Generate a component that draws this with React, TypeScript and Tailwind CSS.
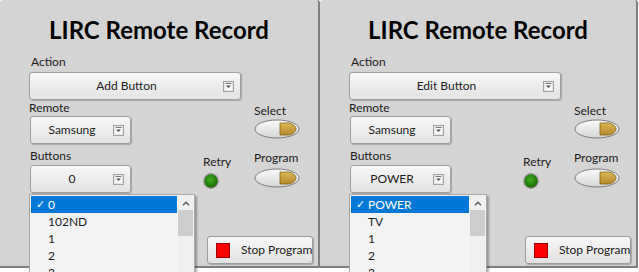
import React from 'react';

const Arrow = () => (
  <span className="flex h-[11px] w-[11px] items-center justify-center border border-[#a3a3a3] bg-[#f8f8f8] shadow-[inset_0_0_0_1px_#e4e4e4]">
    <svg width="7" height="6" viewBox="0 0 7 6">
      <rect x="0.5" y="0" width="6" height="1" fill="#7a7a7a" />
      <path d="M1 2.5 H6 L3.5 5 Z" fill="#555" />
    </svg>
  </span>
);

const Ring = ({ value, className }: { value: string; className: string }) => (
  <div
    className={`flex h-[28px] items-center rounded-[3px] border border-[#a0a0a0] bg-gradient-to-b from-[#f7f7f7] to-[#e3e3e3] shadow-[1px_1px_1px_rgba(0,0,0,0.22)] ${className}`}
  >
    <span className="flex-1 text-center text-[12px] text-[#1b1b1b]">{value}</span>
    <span className="mr-[6px]">
      <Arrow />
    </span>
  </div>
);

const Toggle = () => (
  <svg width="46" height="20" viewBox="0 0 46 20">
    <defs>
      <linearGradient id="tgl" x1="0" y1="0" x2="0" y2="1">
        <stop offset="0" stopColor="#fbfbfb" />
        <stop offset="1" stopColor="#d6d6d6" />
      </linearGradient>
      <linearGradient id="gold" x1="0" y1="0" x2="0" y2="1">
        <stop offset="0" stopColor="#dcb654" />
        <stop offset="1" stopColor="#b38a2a" />
      </linearGradient>
    </defs>
    <ellipse cx="23" cy="10" rx="22" ry="9" fill="url(#tgl)" stroke="#7c7c7c" />
    <path d="M26 4 H34 C39 4 42 8 42 10 C42 12 39 16 34 16 H26 Z" fill="url(#gold)" stroke="#7d5f1c" strokeWidth="0.8" />
  </svg>
);

const Led = () => (
  <svg width="16" height="16" viewBox="0 0 16 16">
    <defs>
      <radialGradient id="led" cx="0.45" cy="0.4" r="0.6">
        <stop offset="0" stopColor="#3fae1c" />
        <stop offset="1" stopColor="#146400" />
      </radialGradient>
    </defs>
    <circle cx="8" cy="8" r="7.3" fill="url(#led)" stroke="#9c9c9c" strokeWidth="1.2" />
  </svg>
);

const StopButton = () => (
  <div className="flex h-[28px] w-[106px] items-center rounded-[3px] border border-[#9c9c9c] bg-gradient-to-b from-[#f7f7f7] to-[#e2e2e2] shadow-[1px_1px_1px_rgba(0,0,0,0.22)]">
    <span className="ml-[8px] h-[15px] w-[14px] shrink-0 border border-[#a00000] bg-[#ff0000]" />
    <span className="ml-[11px] whitespace-nowrap text-[12px] text-[#1b1b1b]">Stop Program</span>
  </div>
);

const List = ({ items, className }: { items: string[]; className: string }) => (
  <div className={`absolute top-[194px] left-[29px] flex h-[100px] border border-[#a8a8a8] bg-[#f3f3f3] p-[1px] shadow-[2px_2px_2px_rgba(0,0,0,0.3)] ${className}`}>
    <div className="flex-1">
      {items.map((item, i) => (
        <div
          key={item + i}
          className={`flex h-[17px] items-center text-[12px] ${i === 0 ? 'bg-[#0078d7] text-white' : 'text-[#1b1b1b]'}`}
        >
          <span className="w-[17px] pl-[5px] text-[11px]">{i === 0 ? '✓' : ''}</span>
          <span>{item}</span>
        </div>
      ))}
    </div>
    <div className="ml-[1px] w-[15px] bg-[#f0f0f0]">
      <div className="flex h-[14px] items-center justify-center">
        <svg width="8" height="5" viewBox="0 0 8 5">
          <path d="M1 4.2 L4 1.2 L7 4.2" fill="none" stroke="#555" strokeWidth="1.3" />
        </svg>
      </div>
      <div className="h-[26px] bg-[#cdcdcd]" />
    </div>
  </div>
);

const Panel = ({
  action,
  current,
  items,
  listClass,
  className,
}: {
  action: string;
  current: string;
  items: string[];
  listClass: string;
  className: string;
}) => (
  <div className={`relative h-[268px] shrink-0 rounded-t-[3px] border-b-2 border-r-2 border-[#7f7f7f] bg-[#d4d4d4] ${className}`}>
    <h1 className="pt-[16px] text-center text-[24px] leading-[28px] font-bold text-black">LIRC Remote Record</h1>
    <div className="pl-[29px]">
      <div className="mt-[10px] pl-[2px] text-[12px] leading-[15px]">Action</div>
      <Ring value={action} className="mt-[3px] w-[212px]" />
    </div>
    <div className="flex pl-[30px]">
      <div className="w-[101px]">
        <div className="-ml-[1px] text-[12px] leading-[15px]">Remote</div>
        <Ring value="Samsung" className="mt-[1px] w-[101px]" />
        <div className="mt-[4px] text-[12px] leading-[15px]">Buttons</div>
        <Ring value={current} className="mt-[2px] w-[101px]" />
      </div>
      <div className="ml-[72px] mt-[54px] flex w-[51px] flex-col items-start">
        <span className="text-[12px] leading-[15px]">Retry</span>
        <span className="mt-[4px]">
          <Led />
        </span>
      </div>
      <div className="mt-[3px] flex flex-col items-start">
        <span className="text-[12px] leading-[15px]">Select</span>
        <span className="mt-[1px] block h-[20px]">
          <Toggle />
        </span>
        <span className="mt-[11px] text-[12px] leading-[15px]">Program</span>
        <span className="mt-[3px] block h-[20px]">
          <Toggle />
        </span>
      </div>
    </div>
    <div className="mt-[43px] flex justify-end pr-[5px]">
      <StopButton />
    </div>
    <List items={items} className={listClass} />
  </div>
);

export default function App() {
  return (
    <div className="flex h-[272px] w-[639px] overflow-hidden bg-white font-['Lato','Open_Sans',sans-serif] text-[#1b1b1b]">
      <Panel
        action="Add Button"
        current="0"
        items={['0', '102ND', '1', '2', '3']}
        listClass="w-[166px]"
        className="w-[320px]"
      />
      <Panel
        action="Edit Button"
        current="POWER"
        items={['POWER', 'TV', '1', '2', '3']}
        listClass="w-[138px]"
        className="w-[318px]"
      />
    </div>
  );
}
